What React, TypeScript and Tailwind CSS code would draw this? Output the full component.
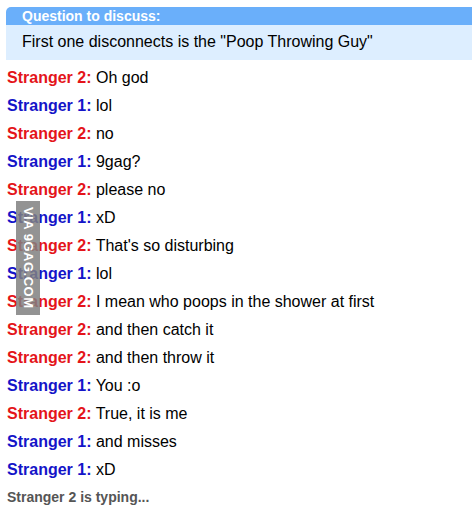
import React from 'react';

type Line = { who: 1 | 2; text: string };

const lines: Line[] = [
    { who: 2, text: 'Oh god' },
    { who: 1, text: 'lol' },
    { who: 2, text: 'no' },
    { who: 1, text: '9gag?' },
    { who: 2, text: 'please no' },
    { who: 1, text: 'xD' },
    { who: 2, text: "That's so disturbing" },
    { who: 1, text: 'lol' },
    { who: 2, text: 'I mean who poops in the shower at first' },
    { who: 2, text: 'and then catch it' },
    { who: 2, text: 'and then throw it' },
    { who: 1, text: 'You :o' },
    { who: 2, text: 'True, it is me' },
    { who: 1, text: 'and misses' },
    { who: 1, text: 'xD' },
];

export default function App() {
    return (
        <div className="relative w-[472px] h-[513px] bg-white overflow-hidden font-['Liberation_Sans',Arial,sans-serif]">
            <div className="pt-[7px] pl-[6px]">
                <div className="rounded-tl-[5px] overflow-hidden">
                    <div className="h-[18px] bg-[#6aaffa] pl-4 text-[14px] font-bold leading-[18px] text-white">
                        Question to discuss:
                    </div>
                    <div className="h-[35px] bg-[#ddeeff] pl-4 pt-[7px] text-[16px] leading-[20px] text-black">
                        First one disconnects is the "Poop Throwing Guy"
                    </div>
                </div>
            </div>

            <div className="flex flex-col pl-[7px] pt-[4px]">
                {lines.map((l, i) => (
                    <div key={i} className="h-[28px] text-[16px] leading-[28px] text-black">
                        <span className={l.who === 2 ? 'font-bold text-[#e4141a]' : 'font-bold text-[#1414c8]'}>
                            Stranger {l.who}:
                        </span>{' '}
                        {l.text}
                    </div>
                ))}
                <div className="h-[28px] text-[14px] font-bold leading-[26px] text-[#555555]">
                    Stranger 2 is typing...
                </div>
            </div>

            {/* watermark */}
            <div className="absolute left-[16px] top-[201px] flex h-[114px] w-[24px] items-center justify-center bg-[#808080]/85">
                <span className="rotate-90 whitespace-nowrap text-[13px] font-bold tracking-[0.5px] text-white">
                    VIA 9GAG.COM
                </span>
            </div>
        </div>
    );
}
